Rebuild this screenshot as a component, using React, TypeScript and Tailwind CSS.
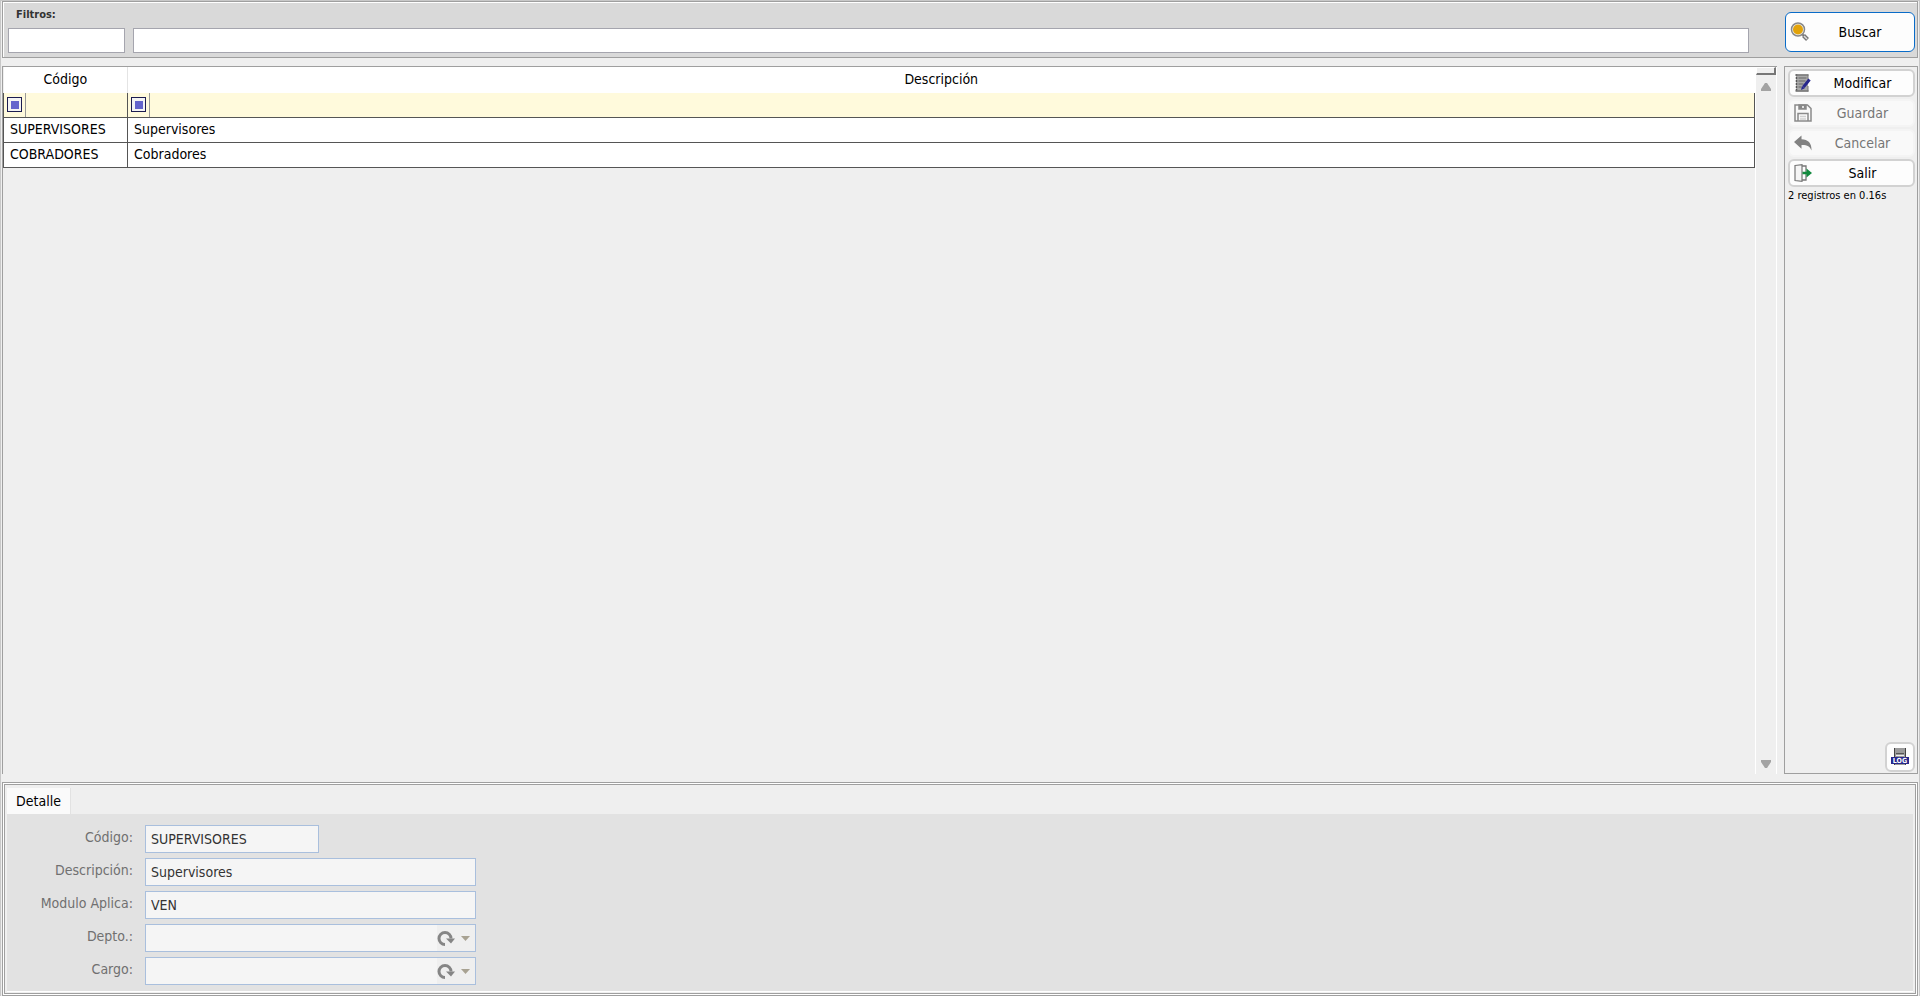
import { useState } from "react";
import type { ReactNode } from "react";

const rows = [
  { codigo: "SUPERVISORES", descripcion: "Supervisores" },
  { codigo: "COBRADORES", descripcion: "Cobradores" },
];

function SearchIcon() {
  return (
    <svg width="20" height="20" viewBox="0 0 20 20">
      <path d="M12 12l2 2" stroke="#777" strokeWidth="2" />
      <path d="M13.5 13.5l4 4" stroke="#777" strokeWidth="4" />
      <path d="M14 14l3 3" stroke="#ddd" strokeWidth="1.5" />
      <circle cx="8" cy="7.500" r="6.500" fill="#eee" stroke="#888" strokeWidth="1.5" />
      <circle cx="8" cy="7.500" r="5" fill="#e2a30a" />
    </svg>
  );
}

function EditIcon() {
  return (
    <svg width="18" height="18" viewBox="0 0 18 18">
      <path d="M2 .5h12v17H2z" fill="#a9a9a9" />
      <path d="M2.500 0v18" stroke="#555" strokeWidth="1.5" strokeDasharray="2 1" />
      <path d="M1.500 1h13M1.500 17h13" stroke="#777" strokeWidth="1.5" />
      <path d="M4.500 4h8M4.500 7h7M4.500 10h5M4.500 13h3" stroke="#666" strokeWidth="1.2" />
      <path d="M14 .5v5M14 12v5.500" stroke="#777" />
      <path d="M15.500 5.500L9.500 13" stroke="#27278c" strokeWidth="3" />
      <path d="M7 16l1-4 2.800 2.200z" fill="#27278c" />
    </svg>
  );
}

function SaveIcon() {
  return (
    <svg width="18" height="18" viewBox="0 0 18 18" fill="none" stroke="#8a8a8a" strokeWidth="1.5">
      <path d="M1 1h12.500L17 4.500V17H1z" />
      <path d="M5 1h7v4H5z" fill="#858585" />
      <path d="M9 2v2" stroke="#fff" />
      <path d="M4 17V9.500h10V17" />
      <path d="M6 12.500h6M6 15h6" stroke="#d0d0d0" />
    </svg>
  );
}

function UndoIcon() {
  return (
    <svg width="18" height="18" viewBox="0 0 18 18">
      <path d="M7.500 1.500v3.800c6.500.2 10.300 3.700 10 11.200-1.500-4.300-4.500-5.800-10-5.600v3.900L0 8z" fill="#828282" />
    </svg>
  );
}

function ExitIcon() {
  return (
    <svg width="18" height="18" viewBox="0 0 18 18" fill="none">
      <path d="M8 2h4v14H8" stroke="#777" strokeWidth="1.3" />
      <path d="M1 1.500l7-.8v16.600l-7-.8z" fill="#f5f5f5" stroke="#777" strokeWidth="1.2" />
      <path d="M8.500 9h6" stroke="#128a3e" strokeWidth="2.500" />
      <path d="M12.500 4.500L18 9l-5.500 4.500z" fill="#128a3e" />
    </svg>
  );
}

function LogIcon() {
  return (
    <svg width="18" height="20" viewBox="0 0 18 20">
      <path d="M3 1h12v17H3z" fill="#9b9b9b" />
      <path d="M3.500 1v17M14.500 1v17" stroke="#444" />
      <path d="M5 6.500h8" stroke="#555" />
      <path d="M5 8.500h8" stroke="#eee" />
      <path d="M0 10h18v7H0z" fill="#27278c" />
      <text x="9" y="16" textAnchor="middle" fontSize="7" fontWeight="700" fill="#fff" fontFamily="DejaVu Sans Condensed, sans-serif">LOG</text>
    </svg>
  );
}

function RefreshIcon() {
  return (
    <svg width="18" height="17" viewBox="0 0 18 17">
      <path d="M8 14.500A6 6 0 1 1 14 8.500" fill="none" stroke="#858585" strokeWidth="3" />
      <path d="M9 8.500h9L14 13.500z" fill="#858585" />
    </svg>
  );
}

type ActionProps = {
  icon: ReactNode;
  label: string;
  disabled?: boolean;
};

function ActionButton({ icon, label, disabled }: ActionProps) {
  return (
    <button
      disabled={disabled}
      className="flex h-7 w-full items-center rounded-md border-2 border-[#d2d2d2] bg-[#fdfdfd] pl-1 text-black disabled:border-[#f4f4f4] disabled:bg-[#f9f9f9] disabled:text-[#767676]"
    >
      {icon}
      <span className="flex-1 text-center">{label}</span>
    </button>
  );
}

function FilterCell({ label }: { label: string }) {
  return (
    <div className="flex h-6">
      <button aria-label={`Filtrar ${label}`} className="flex w-[22px] items-start justify-center border-r border-[#999] pt-1">
        <span className="flex size-[15px] items-center justify-center border border-[#1c1c50] bg-[#f4f4f4]">
          <span className="size-2 bg-[#6464cc]" />
        </span>
      </button>
      <input aria-label={label} className="min-w-0 flex-1 bg-transparent px-1 outline-none" />
    </div>
  );
}

type FieldProps = {
  id: string;
  label: string;
  value: string;
  width: string;
};

const fieldBox = "h-7 border border-[#a9bfdd] bg-[#f5f5f5]";
const fieldLabel = "w-[126px] pb-1 text-right text-[#707070]";

function TextField({ id, label, value, width }: FieldProps) {
  return (
    <div className="flex items-center gap-3">
      <label htmlFor={id} className={fieldLabel}>{label}</label>
      <input id={id} readOnly value={value} className={`${fieldBox} ${width} px-[5px] text-[#333] outline-none`} />
    </div>
  );
}

function ComboField({ id, label }: { id: string; label: string }) {
  return (
    <div className="flex items-center gap-3">
      <label htmlFor={id} className={fieldLabel}>{label}</label>
      <div className={`${fieldBox} flex w-[331px]`}>
        <select id={id} disabled className="min-w-0 flex-1 appearance-none px-[5px]">
          <option value=""></option>
        </select>
        <button aria-label="Recargar" className="flex items-center bg-[#efefef]">
          <RefreshIcon />
        </button>
        <span className="flex w-5 items-center justify-center bg-[#efefef]">
          <svg width="9" height="5" viewBox="0 0 9 5">
            <path d="M0 0h9L4.500 5z" fill="#a8a292" />
          </svg>
        </span>
      </div>
    </div>
  );
}

export default function App() {
  const [codigo, setCodigo] = useState("");
  const [descripcion, setDescripcion] = useState("");

  return (
    <div className="flex min-h-screen flex-col border-x border-t border-[#c8c8c8] bg-[#efefef] px-px font-['DejaVu_Sans_Condensed','DejaVu_Sans',sans-serif] text-sm text-black">
      {/* Filters */}
      <header className="flex h-[57px] border border-[#9f9f9f] bg-[#d9d9d9] shadow-[inset_1px_1px_0_#fff]">
        <div className="flex min-w-0 flex-1 flex-col pl-[5px]">
          <label htmlFor="filtro-codigo" className="h-[26px] pt-[5px] pl-2 text-[11px] leading-4 font-bold text-[#333]">
            Filtros:
          </label>
          <div className="flex gap-2">
            <input
              id="filtro-codigo"
              value={codigo}
              onChange={(e) => setCodigo(e.target.value)}
              className="h-[25px] w-[117px] border border-[#a5a5ae] bg-white px-1 outline-none"
            />
            <input
              aria-label="Filtrar descripción"
              value={descripcion}
              onChange={(e) => setDescripcion(e.target.value)}
              className="h-[25px] min-w-0 flex-1 border border-[#a5a5ae] bg-white px-1 outline-none"
            />
          </div>
        </div>
        <button className="mt-[10px] mr-0.5 ml-9 flex h-10 w-[130px] items-center rounded-md border border-[#0a6cc8] bg-[#fdfdfd] pr-1 pl-1">
          <SearchIcon />
          <span className="flex-1 text-center">Buscar</span>
        </button>
      </header>

      <main className="mt-2 flex flex-1 gap-[7px]">
        {/* Results grid */}
        <div className="flex min-w-0 flex-1 border-t border-l border-[#9f9f9f]">
          <div className="min-w-0 flex-1">
            <table className="w-full table-fixed border-collapse">
              <colgroup>
                <col className="w-[124px]" />
                <col />
              </colgroup>
              <thead>
                <tr className="h-[26px] bg-white">
                  <th className="border-r border-[#e4e4e4] p-0 pb-0.5 font-normal">Código</th>
                  <th className="p-0 pb-0.5 font-normal">Descripción</th>
                </tr>
                <tr className="bg-[#fffadc]">
                  <td className="border-x border-b border-[#555] p-0"><FilterCell label="Código" /></td>
                  <td className="border-x border-b border-[#555] p-0"><FilterCell label="Descripción" /></td>
                </tr>
              </thead>
              <tbody>
                {rows.map((row) => (
                  <tr key={row.codigo} className="h-[25px] bg-white leading-5">
                    <td className="border border-[#555] p-0 pb-[3px] pl-[6px]">{row.codigo}</td>
                    <td className="border border-[#555] p-0 pb-[3px] pl-[6px]">{row.descripcion}</td>
                  </tr>
                ))}
              </tbody>
            </table>
          </div>
          <div className="flex w-[22px] flex-col items-center border-x border-white">
            <div className="h-2 w-full border-t border-l border-r-2 border-b-2 border-t-white border-r-[#777] border-b-[#777] border-l-white bg-[#efefef]" />
            <svg width="10" height="8" viewBox="0 0 10 8" className="mt-2">
              <path d="M4 0h2l4 6v2H0V6z" fill="#a3a3a3" />
            </svg>
            <svg width="10" height="8" viewBox="0 0 10 8" className="mt-auto mb-[6px]">
              <path d="M4 8h2l4-6V0H0v2z" fill="#a3a3a3" />
            </svg>
          </div>
        </div>

        {/* Actions */}
        <aside className="flex w-[134px] flex-col border border-[#9f9f9f] pt-0.5 pr-0.5 pl-[3px]">
          <div className="flex flex-col gap-0.5">
            <ActionButton icon={<EditIcon />} label="Modificar" />
            <ActionButton icon={<SaveIcon />} label="Guardar" disabled />
            <ActionButton icon={<UndoIcon />} label="Cancelar" disabled />
            <ActionButton icon={<ExitIcon />} label="Salir" />
          </div>
          <p className="pt-px text-[11px] leading-4 whitespace-nowrap">2 registros en 0.16s</p>
          <button aria-label="Log" className="mt-auto mb-px flex size-[30px] items-center justify-center self-end rounded-md border-2 border-[#d2d2d2] bg-[#fdfdfd]">
            <LogIcon />
          </button>
        </aside>
      </main>

      {/* Detail of the selected row */}
      <section className="mt-2 border border-[#9f9f9f] bg-white p-px">
        <div className="border border-[#9f9f9f] bg-[#efefef] px-0.5 pt-[3px] pb-px">
          <div role="tablist" className="flex">
            <button role="tab" aria-selected="true" className="h-[26px] w-16 border-r border-[#e2e2e2] bg-[#fafafa]">
              Detalle
            </button>
          </div>
          <div className="flex flex-col gap-[5px] border-b border-white bg-[#e2e2e2] pt-[11px] pb-[6px]">
            <TextField id="codigo" label="Código:" value="SUPERVISORES" width="w-[174px]" />
            <TextField id="descripcion" label="Descripción:" value="Supervisores" width="w-[331px]" />
            <TextField id="modulo" label="Modulo Aplica:" value="VEN" width="w-[331px]" />
            <ComboField id="depto" label="Depto.:" />
            <ComboField id="cargo" label="Cargo:" />
          </div>
        </div>
      </section>
    </div>
  );
}
